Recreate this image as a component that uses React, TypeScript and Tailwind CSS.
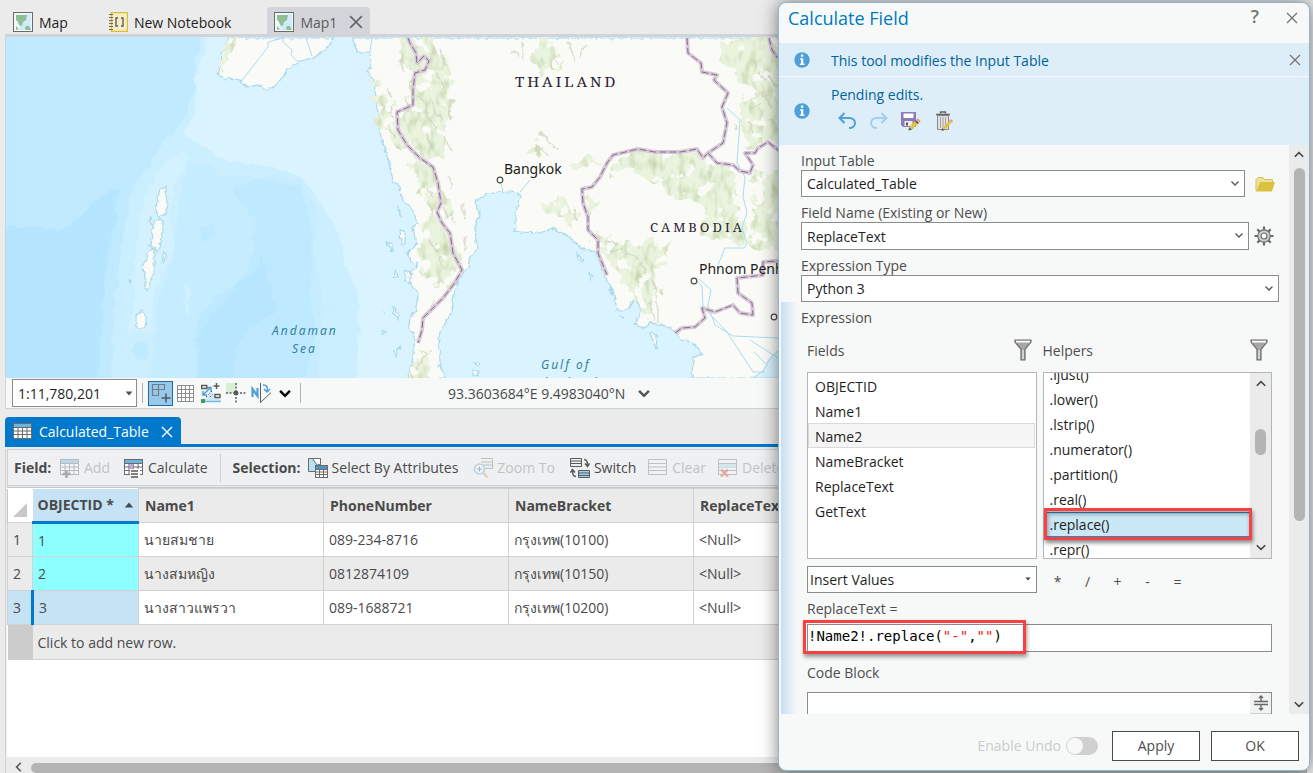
import React from "react";

const baseMap = {
  delta:
    "M228 38 L226 50 L221 52 L222 62 L218 74 L226 80 L228 78 L240 80 L247 87 L258 85 L264 89 L272 89 L283 77 L288 68 L299 62 L312 58 L326 50 L333 38 Z",
  mainland:
    "M352 38 L358 52 L370 52 L371 64 L368 72 L374 80 L376 100 L378 115 L379 130 L384 146 L387 155 L390 165 L393 182 L398 184 L403 200 L412 208 L417 222 L413 228 L417 243 L407 253 L412 262 L418 263 L408 280 L418 293 L417 310 L410 317 L409 327 L415 337 L412 363 L407 378 L445 378 L440 367 L440 352 L438 345 L440 333 L452 310 L454 295 L458 280 L468 267 L470 258 L477 250 L475 227 L480 213 L475 202 L487 193 L500 192 L513 192 L520 195 L515 217 L517 228 L513 230 L520 232 L540 233 L553 228 L570 237 L580 248 L597 252 L603 273 L613 290 L617 310 L627 310 L635 298 L642 310 L635 325 L642 328 L650 323 L670 327 L682 340 L693 343 L703 353 L693 358 L692 378 L1320 378 L1320 38 Z",
  borders: [
    "M408 38 L410 43 L416 53 L417 63 L424 56 L429 61 L425 70 L415 73 L413 90 L413 105 L397 112 L398 130 L407 145 L420 158 L433 167 L438 183 L441 203 L437 212 L442 223 L450 233 L453 253 L462 270 L454 284 L443 298 L423 318 L422 330 L418 343",
    "M687 38 L688 53 L701 63 L702 72 L717 75 L714 80 L728 93 L722 107 L727 123 L723 143 L708 153 L703 158 L697 149 L680 152 L655 152 L638 149 L613 155 L607 163 L600 177 L592 187 L582 189 L583 203 L588 217 L588 230 L598 240 L598 253 L607 275",
    "M708 153 L717 163 L733 165 L740 171 L750 173 L753 165 L745 153 L755 153 L758 148 L768 142 L778 150 L800 150",
    "M675 333 L682 328 L695 327 L705 318 L702 308 L715 312 L733 305 L740 313 L753 315 L752 303 L738 293 L737 278 L763 275 L763 262 L790 260",
    "M769 38 L772 50 L777 57 L790 60",
  ],
  rivers: [
    "M727 108 L740 120 L737 163 L745 177 L743 197 L747 212 L742 228 L747 243 L744 248 L725 248 L718 265",
    "M697 281 L702 286 L703 307 L727 332 L753 372 L765 372",
    "M699 279 L711 290 L708 306 L715 325 L733 336 L778 338",
    "M500 181 L503 191 M530 180 L520 192 M754 352 L768 366 M750 340 L778 358",
    "M240 83 L268 47 L268 42 L283 38 L283 42 L292 50 L291 55 L298 62 M306 38 L312 56 M370 52 L372 38",
  ],
  green: [
    "M228 40 L234 38 L231 60 L224 72 L219 73 L223 60 Z",
    "M371 75 L385 90 L397 112 L398 130 L420 160 L433 168 L438 190 L432 215 L422 190 L400 150 L382 125 Z",
    "M395 38 L430 38 L450 70 L452 120 L440 128 L444 160 L428 158 L404 140 L400 118 L415 105 L410 70 Z",
    "M437 190 L452 200 L450 236 L462 262 L455 280 L438 290 L425 270 L418 245 L428 225 Z",
    "M412 355 L432 350 L428 378 L410 378 Z",
    "M540 38 L558 45 L562 70 L548 68 L538 82 L535 55 Z",
    "M565 155 L600 160 L605 164 L590 168 L568 163 Z",
    "M530 145 L545 152 L540 158 L528 150 Z",
    "M612 158 L640 152 L696 153 L705 160 L740 172 L735 200 L742 215 L710 225 L700 205 L676 200 L660 185 L640 175 L610 176 Z",
    "M584 190 L600 192 L596 215 L590 218 Z",
    "M591 232 L612 240 L640 245 L672 240 L668 262 L650 275 L660 295 L645 320 L630 290 L612 268 L602 262 Z",
    "M700 222 L745 215 L745 240 L728 246 L700 238 Z",
    "M722 38 L768 38 L790 60 L790 148 L768 140 L745 152 L738 110 L752 95 L735 75 L720 60 Z",
    "M750 180 L790 160 L790 250 L752 248 Z",
    "M548 205 L562 196 L578 215 L570 225 L552 215 Z",
  ],
  relief: [
    "M386 88 l6 10 M390 105 l5 14 M386 125 l10 12 M404 95 l3 18 M420 95 l8 22 l8 12 M436 72 l7 18 M430 100 l10 20 M448 100 l4 20 M426 130 l6 20 M446 135 l5 18",
    "M399 60 l4 14 M432 45 l3 12 M440 50 l5 16 M522 42 l2 18 M512 52 l8 6 M568 42 l6 20 M555 58 l5 8 M580 60 l6 -14",
    "M428 185 l4 12 M448 175 l3 14 M445 210 l4 10 M452 215 l2 8 M430 240 l5 12 M440 255 l4 16 M464 205 l2 14 M466 235 l-2 14 M436 300 l-6 12 M424 355 l-6 14",
    "M606 240 l10 4 M610 250 l12 -2 M626 252 l12 6 M640 262 l8 12 M655 282 l4 40 M650 300 l4 20 M540 130 l16 20 M575 210 l2 10 M535 145 l16 10",
    "M758 70 l8 10 M762 92 l10 16 M770 120 l8 10 M750 122 l3 12 M735 125 l2 6 M752 108 l12 -6 M768 75 l7 12",
  ],
  islands: [
    "M157 200 L160 190 L166 186 L166 196 L168 204 L165 214 L158 218 L156 210 Z",
    "M154 222 L158 219 L163 221 L163 232 L161 241 L158 250 L150 246 L152 232 Z",
    "M148 252 L155 248 L154 263 L154 272 L150 282 L148 290 L144 288 L146 278 L142 266 L147 260 Z",
    "M136 316 L141 310 L146 317 L145 328 L136 328 Z",
    "M150 216 l2 8 l-3 -2 Z M163 252 l4 3 l-4 7 Z M129 280 l3 0 l-1 2 Z",
    "M400 230 l5 2 l0 12 l-4 0 Z M386 242 l6 2 l0 6 Z M405 270 l6 2 l-2 12 l-4 -4 Z M396 270 l2 8 l-4 -2 Z",
    "M393 306 l5 8 l0 6 l-4 -6 Z M383 310 l2 4 Z M394 352 l6 -6 l-4 10 Z M383 330 l3 2 l-3 2 Z M398 206 l3 12 l-3 -8 Z",
    "M474 362 l6 1 l-2 4 Z M473 370 l6 1 l-1 5 l-5 -1 Z M578 254 l5 6 l-4 0 Z M589 273 l4 2 l-2 4 Z M610 287 l3 8 l-3 -3 Z M650 333 l7 2 l-1 14 l-4 -10 Z M619 316 l5 2 Z",
  ],
};

const BaseMap = () => (
  <svg
    className="block h-full w-full"
    viewBox="0 0 1301 341"
    preserveAspectRatio="xMinYMin slice"
    role="img"
    aria-label="Topographic map of the Andaman Sea and Thailand"
  >
    <defs>
      <filter id="rough" x="-5%" y="-5%" width="110%" height="110%" colorInterpolationFilters="sRGB">
        <feTurbulence type="fractalNoise" baseFrequency="0.09" numOctaves="3" seed="4" />
        <feDisplacementMap in="SourceGraphic" scale="9" xChannelSelector="R" yChannelSelector="G" />
      </filter>
      <filter id="coast" x="-5%" y="-5%" width="110%" height="110%" colorInterpolationFilters="sRGB">
        <feTurbulence type="fractalNoise" baseFrequency="0.2" numOctaves="2" seed="9" />
        <feDisplacementMap in="SourceGraphic" scale="5" xChannelSelector="R" yChannelSelector="G" />
      </filter>
      {/* ragged vegetation with clearings and a little hill shade */}
      <filter id="forest" x="-5%" y="-5%" width="110%" height="110%" colorInterpolationFilters="sRGB">
        <feTurbulence type="fractalNoise" baseFrequency="0.06" numOctaves="4" seed="12" result="noise" />
        <feDisplacementMap in="SourceGraphic" in2="noise" scale="24" xChannelSelector="R" yChannelSelector="G" result="shape" />
        <feColorMatrix in="noise" values="0 0 0 0 0  0 0 0 0 0  0 0 0 0 0  0 0 22 0 -7.5" result="clearings" />
        <feComposite in="shape" in2="clearings" operator="in" result="patches" />
        <feTurbulence type="fractalNoise" baseFrequency="0.14 0.07" numOctaves="2" seed="3" />
        <feColorMatrix values="0 0 0 0 0.72  0 0 0 0 0.78  0 0 0 0 0.6  1.6 0 0 0 -0.75" />
        <feComposite in2="patches" operator="in" result="shade" />
        <feMerge>
          <feMergeNode in="patches" />
          <feMergeNode in="shade" />
        </feMerge>
      </filter>
    </defs>
    <g transform="translate(-6 -37)">
      <path fill="#d9f3ff" d="M0 30 H1320 V380 H0 Z" />
      <g filter="url(#rough)">
        <path fill="#ccefff" d="M0 20 H208 L206 50 L197 70 L195 110 L184 134 L210 149 L222 160 L260 165 L300 175 L318 198 L340 235 L345 265 L357 292 L360 330 L355 390 H0 Z" />
        <path fill="#c0eaff" d="M0 20 H206 L196 58 L194 90 L188 112 L176 132 L162 142 L150 165 L136 182 L130 200 L124 230 L116 290 L110 390 H0 Z" />
        <path fill="#b6e5ff" d="M0 224 L60 231 L80 216 L100 196 L118 186 L115 220 L107 260 L103 300 L97 390 H0 Z" />
        <path fill="#c6ecff" d="M187 165 L205 160 L220 175 L300 178 L316 210 L314 260 L322 300 L318 390 H150 L158 300 L175 250 L180 200 Z" />
        <path fill="#bfe9ff" d="M232 190 L262 178 L300 186 L312 235 L310 300 L316 340 L300 390 H194 L196 325 L205 305 L236 283 L250 270 L256 220 Z" />
        <path fill="#b8e6ff" d="M198 390 L200 330 L222 305 L238 284 L258 268 L260 250 L272 292 L276 312 L250 330 L236 345 L232 390 Z" />
        <path fill="#bee9ff" d="M200 228 L212 222 L216 238 L204 242 Z" />
        <path fill="#d4f1ff" d="M187 149 L186 162 L174 188 L168 210 L174 232 L173 262 L160 272 L153 300 L151 333 L126 330 L136 304 L133 280 L137 240 L142 206 L150 185 L170 158 Z" />
        <path fill="#d2f1ff" d="M186 282 L190 292 L188 318 L182 300 Z" />
        <path fill="#c0eaff" d="M134 338 L148 344 L148 360 L134 358 Z" />
      </g>
      <g filter="url(#coast)" fill="#fafbf7" stroke="#a9d8ec" strokeWidth="1.2">
        <path d={baseMap.delta} />
        <path d={baseMap.mainland} />
        {baseMap.islands.map((d) => (
          <path key={d} d={d} />
        ))}
      </g>
      <path fill="#d9f3ff" stroke="#a9d8ec" d="M753 378 L763 371 L770 358 L779 350 L800 350 V378 Z" />
      <g filter="url(#forest)" fill="#e9f3dd">
        {baseMap.green.map((d) => (
          <path key={d} d={d} />
        ))}
      </g>
      <g filter="url(#rough)" fill="none" stroke="#cfcfbd" strokeWidth="1.6" opacity="0.7">
        {baseMap.relief.map((d) => (
          <path key={d} d={d} />
        ))}
      </g>
      <g fill="none" stroke="#aadcf2" strokeWidth="1">
        {baseMap.rivers.map((d) => (
          <path key={d} d={d} />
        ))}
      </g>
      {baseMap.borders.map((d) => (
        <g key={d} fill="none" strokeLinejoin="round">
          <path d={d} stroke="#d8c8da" strokeWidth="4" />
          <path d={d} stroke="#7d7280" strokeWidth="1" strokeDasharray="7 3" />
        </g>
      ))}
      <g className="font-['Noto_Serif','DejaVu_Serif',serif] tracking-[3px]" fill="#2b2233">
        <text className="text-[15px]" x="515" y="87">
          THAILAND
        </text>
        <text className="text-[13px]" x="650" y="232">
          CAMBODIA
        </text>
      </g>
      <g className="font-['Noto_Sans',sans-serif] text-[14px]" fill="#1c1c1c">
        <text x="504" y="174">Bangkok</text>
        <text x="699" y="274">Phnom Penh</text>
      </g>
      <g className="font-['Noto_Sans',sans-serif] text-[12px] italic tracking-[2px]" fill="#33819f">
        <text x="272" y="335">Andaman</text>
        <text x="292" y="353">Sea</text>
        <text x="541" y="369">Gulf of</text>
        <text x="536" y="387">Thailand</text>
      </g>
      <g fill="#fff" stroke="#4d4d4d" strokeWidth="1.2">
        <circle cx="500" cy="180" r="2.8" />
        <circle cx="694" cy="281" r="2.8" />
        <circle cx="774" cy="317" r="2.8" />
      </g>
    </g>
  </svg>
);

const MapIcon = () => (
  <svg className="size-5 shrink-0" viewBox="0 0 20 20" aria-hidden="true">
    <rect x="0.5" y="0.5" width="19" height="19" fill="#f1f8fc" stroke="#6b6b6b" />
    <path fill="#d3ebf8" d="M13 2h5v16H7l-1-4 4-4Z" />
    <path fill="#8fbf97" d="M3 3h11l-1 5-3 2-1 4-3-1-1-3-2-2Z" />
    <path fill="#8fbf97" d="M3 14l3 3-3 1Z M12 17c0-3 2-4 4-3l2 4h-5Z" />
  </svg>
);

const NotebookIcon = () => (
  <svg className="size-5 shrink-0" viewBox="0 0 20 20" aria-hidden="true">
    <rect x="3.5" y="0.5" width="16" height="19" fill="#f4edc6" stroke="#d9bf3a" strokeWidth="1.4" />
    <path stroke="#6b6b6b" d="M1 2.5h4M1 5.5h4M1 8.5h4M1 11.5h4M1 14.5h4M1 17.5h4" />
    <path fill="none" stroke="#5f5f5f" strokeWidth="1.4" d="M10 6H8v8h2M13 6h2v8h-2" />
  </svg>
);

const Cross = ({ className }: { className: string }) => (
  <svg className={className} viewBox="0 0 12 12" aria-hidden="true">
    <path d="M1 1l10 10M11 1L1 11" fill="none" stroke="currentColor" strokeWidth="1.4" />
  </svg>
);

const Chevron = ({ className }: { className: string }) => (
  <svg className={className} viewBox="0 0 10 10" aria-hidden="true">
    <path d="M1.5 3.5L5 7l3.5-3.5" fill="none" stroke="currentColor" strokeWidth="1.3" />
  </svg>
);

const BoldChevron = ({ className }: { className: string }) => (
  <svg className={className} viewBox="0 0 10 10" aria-hidden="true">
    <path d="M1.5 3.5L5 7l3.5-3.5" fill="none" stroke="currentColor" strokeWidth="1.8" />
  </svg>
);

const Caret = ({ className }: { className: string }) => (
  <svg className={className} viewBox="0 0 8 5" aria-hidden="true">
    <path d="M0.5 0.5h7L4 4.5z" fill="currentColor" />
  </svg>
);

const TableGlyph = ({ children, faded }: { children?: React.ReactNode; faded?: boolean }) => (
  <svg className={faded ? "size-5 opacity-40" : "size-5"} viewBox="0 0 20 20" aria-hidden="true">
    <rect x="0.5" y="1.5" width="18" height="15" fill="#fff" stroke="#6b6b6b" />
    <rect x="1" y="2" width="17" height="3" fill="#6fb4df" />
    <path stroke="#6b6b6b" d="M1 5.5h17M1 9h17M1 12.5h17M5 5v11M9.5 5v11M14 5v11" />
    {children}
  </svg>
);

const SelectByIcon = () => (
  <svg className="size-5" viewBox="0 0 20 20" aria-hidden="true">
    <path fill="#b5e3f2" stroke="#6b6b6b" d="M0.5 0.5h12v13h-12z" />
    <path fill="#fff" stroke="#6b6b6b" d="M4.5 0.5h8v6L9 7z" />
    <rect x="7.5" y="7.5" width="12" height="12" fill="#fff" stroke="#6b6b6b" />
    <rect x="8" y="8" width="11" height="3" fill="#4d93c1" />
    <path stroke="#6b6b6b" d="M8 11.5h11M8 14h11M8 16.5h11M11.5 11v8M15.5 11v8" />
  </svg>
);

const ZoomToIcon = () => (
  <svg className="size-5 opacity-40" viewBox="0 0 20 20" aria-hidden="true">
    <path fill="#e9f1ea" stroke="#7b7b7b" d="M8 0.5h11.5v10H12M8 4h11M10 7h9" />
    <circle cx="6.5" cy="11" r="5" fill="#eff8ff" stroke="#5aa7d8" strokeWidth="1.5" />
    <path stroke="#555" d="M4 11h5M6.5 8.5v5" />
    <path stroke="#d89a5b" strokeWidth="2.2" d="M10.5 15l4 4.5" />
  </svg>
);

const SwitchIcon = () => (
  <svg className="size-5" viewBox="0 0 20 20" aria-hidden="true">
    <path fill="#eef1f2" stroke="#5b5b5b" d="M0.5 0.5h11v8h-11zM0.5 3h11M0.5 5.5h11" />
    <path fill="#9ad7ec" stroke="#5b5b5b" d="M8.5 12.5h11v7h-11zM8.5 15h11M8.5 17.5h11" />
    <path fill="none" stroke="#5b5b5b" strokeWidth="1.5" d="M14 1.5c3 0 3.5 2 3.5 6M15 5.5l2.5 3 2-3M6 18.5c-3 0-3.5-2-3.5-6M0.5 14.5l2-3 2.5 3" />
  </svg>
);

const ClearIcon = ({ remove }: { remove?: boolean }) => (
  <svg className="size-5 opacity-40" viewBox="0 0 20 20" aria-hidden="true">
    <path fill="#f5f5f5" stroke="#7b7b7b" d="M0.5 1.5h18v15h-18zM0.5 5.5h18M0.5 9h18M0.5 12.5h18" />
    {remove && <path fill="#a8dced" d="M1 6h17v3H1z" />}
    {remove && <path stroke="#d5432b" strokeWidth="2.4" d="M3 11.5l7 7M10 11.5l-7 7" />}
  </svg>
);

const InfoIcon = () => (
  <svg className="size-4 shrink-0" viewBox="0 0 16 16" aria-hidden="true">
    <circle cx="8" cy="8" r="7.7" fill="#4c9fd8" />
    <path fill="#fff" d="M6.9 2.6h2.4v2.2H6.9zM6 6.2h3.3v5.4h1.2v1.3H5.8v-1.3h1.2V7.5H6z" />
  </svg>
);

const UndoIcon = ({ className }: { className: string }) => (
  <svg className={className} viewBox="0 0 20 20" aria-hidden="true">
    <path fill="none" stroke="#4c9fd8" strokeWidth="2" d="M7.5 2L2.5 7l5 5M3 7h9c4 0 6 2.500 6 5s-2 5-6 5" />
  </svg>
);

const SaveEditsIcon = () => (
  <svg className="size-5" viewBox="0 0 20 20" aria-hidden="true">
    <path fill="#8a7bbd" d="M0 1h15v15H2l-2-2z" />
    <path fill="#fff" d="M2.5 2.5h10V7h-10z" />
    <path fill="#eee" d="M3.5 10h8v5h-8z" />
    <path fill="#555" d="M5 11.5h2v3H5z" />
    <path stroke="#e0c341" strokeWidth="4" d="M10 17l6-6" />
    <path fill="#555" d="M7.5 19.5l.8-3.5 2.8 2.8z" />
    <path stroke="#555" strokeWidth="4" d="M15.3 11.7l1.2-1.2" />
    <path stroke="#e99a85" strokeWidth="4" d="M16.5 10.5l1.8-1.8" />
  </svg>
);

const DiscardEditsIcon = () => (
  <svg className="size-5" viewBox="0 0 20 20" aria-hidden="true">
    <path fill="#e0e0e0" stroke="#8a8a8a" d="M2.5 4.5h11v14h-11z" />
    <path stroke="#a5a5a5" d="M5.5 6v11M8 6v11M10.5 6v11" />
    <path stroke="#666" strokeWidth="1.4" d="M1 3.5h14M5.5 2.5V1h5v1.500" fill="none" />
    <path stroke="#e0c341" strokeWidth="3" d="M9 17.5l6.5-7" />
    <path stroke="#e99a85" strokeWidth="3" d="M15.5 10.5L17 9" />
    <path fill="#555" d="M6.5 20l1-3 2 2z" />
  </svg>
);

const FolderIcon = () => (
  <svg className="size-5" viewBox="0 0 20 20" aria-hidden="true">
    <path fill="#eee0a0" stroke="#d8c24f" d="M1 16.5V5.5l2-2h5l1.5 2h8v3" />
    <path fill="#d9c23f" d="M5 8h15l-3 9.500H1z" />
  </svg>
);

const GearIcon = () => (
  <svg className="size-5" viewBox="0 0 20 20" aria-hidden="true">
    <g stroke="#6b6b6b" strokeWidth="2.2">
      <path d="M10 0.5v4M10 15.5v4M0.5 10h4M15.5 10h4M3.3 3.3l2.8 2.8M13.9 13.9l2.8 2.8M3.3 16.7l2.8-2.8M13.9 6.1l2.8-2.8" />
    </g>
    <circle cx="10" cy="10" r="6.2" fill="#d2d2d2" stroke="#6b6b6b" strokeWidth="1.2" />
    <circle cx="10" cy="10" r="3" fill="#f7f9f9" stroke="#6b6b6b" strokeWidth="1.2" />
  </svg>
);

const FunnelIcon = () => (
  <svg className="h-[22px] w-[18px]" viewBox="0 0 18 22" aria-hidden="true">
    <path fill="#a6a6a6" stroke="#6b6b6b" strokeWidth="1.2" d="M1 1h16v2l-6 7.5V21H7V10.5L1 3z" />
    <path fill="#fff" d="M2 1.8h14v1.7H2z" />
    <path stroke="#e3e3e3" strokeWidth="1.5" d="M9 11v9" />
  </svg>
);

const records = [
  { id: 1, name: "นายสมชาย", phone: "089-234-8716", bracket: "กรุงเทพ(10100)" },
  { id: 2, name: "นางสมหญิง", phone: "0812874109", bracket: "กรุงเทพ(10150)" },
  { id: 3, name: "นางสาวแพรวา", phone: "089-1688721", bracket: "กรุงเทพ(10200)" },
];

const fields = ["OBJECTID", "Name1", "Name2", "NameBracket", "ReplaceText", "GetText"];

const helpers = [".ljust()", ".lower()", ".lstrip()", ".numerator()", ".partition()", ".real()", ".replace()", ".repr()"];

const DocumentTabs = () => (
  <nav className="flex h-[34px] items-end pl-[5px] text-[#1f1f1f]">
    <button className="flex h-[27px] items-center gap-1.5 px-2 pt-[3px]">
      <MapIcon />
      Map
    </button>
    <button className="ml-6 flex h-[27px] items-center gap-1.5 px-2 pt-[3px]">
      <NotebookIcon />
      New Notebook
    </button>
    <div className="ml-7 flex h-[27px] items-center rounded-t bg-[#d4d5da] pt-[3px] pr-[7px] pl-[7px]">
      <button className="flex items-center gap-1.5 text-[#5a5a5a]">
        <MapIcon />
        Map1
      </button>
      <button aria-label="Close Map1" className="ml-3 text-[#666]">
        <Cross className="size-3.5" />
      </button>
    </div>
  </nav>
);

const MapStatusBar = () => (
  <div className="flex h-[31px] items-center border-b border-[#d0d0d4] bg-[#f7f9f8] pl-1.5 text-[#4a4a4a]">
    <div className="relative">
      <select aria-label="Map scale" className="h-7 w-[125px] appearance-none border border-[#8c8c8c] bg-white pl-[5px] text-[#1f1f1f]">
        <option>1:11,780,201</option>
      </select>
      <Caret className="pointer-events-none absolute top-3 right-1 h-[5px] w-[8px] text-[#555]" />
    </div>
    <span className="mx-[5px] h-5 w-px bg-[#b0b0b0]" />
    <button aria-label="Dynamic constraints" className="grid size-[25px] place-items-center border border-[#1a6ba8] bg-[#98c8ea]">
      <svg className="size-5" viewBox="0 0 20 20" aria-hidden="true">
        <path fill="none" stroke="#6f7f8a" strokeWidth="1.2" d="M1.5 1.5h6v5h-6zM7.5 1.5h6v5h-6zM1.5 6.5h6v6h-6z" />
        <path stroke="#4a5560" strokeWidth="1.5" d="M15 10.5v9M10.5 15h9" />
      </svg>
    </button>
    <button aria-label="Grid" className="ml-1">
      <svg className="size-[17px]" viewBox="0 0 17 17" aria-hidden="true">
        <path fill="#fff" stroke="#8d8d8d" d="M0.5 0.5h16v16h-16zM4.5 0v17M8.5 0v17M12.5 0v17M0 4.5h17M0 8.5h17M0 12.5h17" />
      </svg>
    </button>
    <button aria-label="Snapping" className="ml-[7px]">
      <svg className="size-5" viewBox="0 0 20 20" aria-hidden="true">
        <path fill="#cfe7f6" d="M3 18L9 8l8 6 3 4z" />
        <path fill="none" stroke="#4c9fd8" strokeWidth="1.5" d="M3 11l6-6M6 4.5h4v4M2 8v4h4" />
        <path stroke="#5b5b5b" strokeDasharray="1.5 2" d="M5 14l7-7M9 14l3-3" />
        <path fill="#fff" stroke="#5b5b5b" strokeWidth="1.4" d="M0.7 2.5h5v3h-5zM14 11.5h5v3h-5z" />
        <path stroke="#5b5b5b" strokeWidth="1.5" d="M15.5 0v6M12.5 3h6" />
        <path fill="#3f9c5c" d="M0 16h4v4H0z" />
        <path stroke="#7db9e0" strokeWidth="1.5" d="M4 18.5h16" />
      </svg>
    </button>
    <button aria-label="Inference" className="ml-[5px]">
      <svg className="size-5" viewBox="0 0 20 20" aria-hidden="true">
        <path fill="#d9efd2" d="M0 0h10v10H0z" />
        <path stroke="#5b5b5b" strokeWidth="1.5" strokeDasharray="2 1.5" d="M0 10h20M10 0v20" />
        <path fill="#5b5b5b" d="M8 8h4v4H8z" />
      </svg>
    </button>
    <button aria-label="Ground to grid correction" className="ml-[5px]">
      <svg className="size-5" viewBox="0 0 20 20" aria-hidden="true">
        <path fill="none" stroke="#4c9fd8" strokeWidth="2.2" d="M1.5 14V6l5 7V5" />
        <path stroke="#5b5b5b" d="M9.5 0v19.5l10.5-10" fill="none" />
        <path fill="none" stroke="#4c9fd8" strokeWidth="1.5" d="M12 2c4 0 5 2 4 6M13 6l3 3 3-3" />
      </svg>
    </button>
    <button aria-label="More map options" className="ml-[7px] text-black">
      <BoldChevron className="size-3.5" />
    </button>
    <span className="ml-2 h-5 w-px bg-[#b0b0b0]" />
    <span className="ml-[147px]">93.3603684°E 9.4983040°N</span>
    <button aria-label="Coordinate format" className="ml-3 text-[#555]">
      <BoldChevron className="size-3.5" />
    </button>
  </div>
);

const TableToolbar = () => (
  <div className="flex h-[37px] items-center border border-[#cfd0d3] bg-[#eff0f2] pl-1.5 whitespace-nowrap text-[#4a4a4a]">
    <span className="w-[46px] font-bold">Field:</span>
    <button disabled className="flex w-16 items-center gap-1 text-[#c2c2c4]">
      <TableGlyph faded>
        <path stroke="#444" strokeWidth="2.4" d="M6.5 12v8M2.5 16h8" />
      </TableGlyph>
      Add
    </button>
    <button className="flex items-center gap-1">
      <TableGlyph>
        <path fill="#b9a9d3" d="M5.5 6h4v10h-4z" />
        <path fill="#fff" d="M6 11h10v8H6z" />
        <path stroke="#555" strokeWidth="1.6" d="M7 13h7M7 16h7M7 19h7" />
      </TableGlyph>
      Calculate
    </button>
    <span className="mx-3 h-7 w-px bg-[#cfcfcf]" />
    <span className="w-[75px] font-bold">Selection:</span>
    <button className="flex items-center gap-1">
      <SelectByIcon />
      Select By Attributes
    </button>
    <button disabled className="ml-[15px] flex items-center gap-1 text-[#c2c2c4]">
      <ZoomToIcon />
      Zoom To
    </button>
    <button className="ml-[15px] flex items-center gap-1">
      <SwitchIcon />
      Switch
    </button>
    <button disabled className="ml-3 flex items-center gap-1 text-[#c2c2c4]">
      <ClearIcon />
      Clear
    </button>
    <button disabled className="ml-3 flex items-center gap-1 text-[#c2c2c4]">
      <ClearIcon remove />
      Delete
    </button>
  </div>
);

const AttributeTable = () => (
  <table className="w-full table-fixed border-collapse text-left text-[#4a4a4a]">
    <colgroup>
      <col className="w-[25px]" />
      <col className="w-[106px]" />
      <col className="w-[185px]" />
      <col className="w-[185px]" />
      <col className="w-[185px]" />
      <col />
    </colgroup>
    <thead>
      <tr className="h-[34px] bg-[#ebebeb]">
        <th aria-label="Row" className="border-l border-[#c8c8c8] bg-white">
          <svg className="mt-2.5 ml-[5px] size-3.5" viewBox="0 0 14 14" aria-hidden="true">
            <path fill="#c8c8c8" d="M14 0v14H0z" />
          </svg>
        </th>
        <th className="border-b-[3px] border-b-[#0079cc] bg-[#c6e2f5] pr-1 pl-[5px]">
          <span className="flex items-center justify-between">
            OBJECTID *
            <Caret className="h-1.5 w-2.5 rotate-180" />
          </span>
        </th>
        <th className="border border-[#d2d2d2] px-1.5">Name1</th>
        <th className="border border-[#d2d2d2] px-1.5">PhoneNumber</th>
        <th className="border border-[#d2d2d2] px-1.5">NameBracket</th>
        <th className="border border-[#d2d2d2] px-1.5">ReplaceText</th>
      </tr>
    </thead>
    <tbody>
      {records.map((r) => (
        <tr key={r.id} className={r.id === 2 ? "h-[34px] bg-[#ebebeb]" : "h-[34px] bg-white"}>
          <td
            className={
              r.id === 3
                ? "border border-r-[3px] border-[#d2d2d2] border-r-[#0079cc] bg-[#c6e2f5] pl-[5px]"
                : "border border-[#d2d2d2] bg-[#ebebeb] pl-[5px]"
            }
          >
            {r.id}
          </td>
          <td className={r.id === 3 ? "border border-[#d2d2d2] bg-[#c6e2f5] px-[5px]" : "border border-[#d2d2d2] bg-[#8cffff] px-[5px]"}>
            {r.id}
          </td>
          <td className="border border-[#d2d2d2] px-[5px]">{r.name}</td>
          <td className="border border-[#d2d2d2] px-[5px]">{r.phone}</td>
          <td className="border border-[#d2d2d2] px-[5px]">{r.bracket}</td>
          <td className="border border-[#d2d2d2] px-[5px]">&lt;Null&gt;</td>
        </tr>
      ))}
      <tr className="h-[35px] bg-[#ebebeb]">
        <td className="bg-[#cccccc]" />
        <td colSpan={5} className="border-b border-[#d2d2d2] px-[5px]">
          Click to add new row.
        </td>
      </tr>
    </tbody>
  </table>
);

const Combo = ({ id, value, className }: { id: string; value: string; className: string }) => (
  <div className="relative flex-1">
    <select id={id} className={`w-full appearance-none border border-[#8c8c8c] bg-white pl-[5px] text-[#1f1f1f] ${className}`}>
      <option>{value}</option>
    </select>
    <Chevron className="pointer-events-none absolute top-2 right-[5px] size-2.5 text-[#555]" />
  </div>
);

const ExpressionSection = () => (
  <div className="ml-0.5 bg-linear-to-r from-[#c6def2] to-transparent to-[16px] pt-1.5 pr-[7px] pl-5">
    <h3 className="leading-5">Expression</h3>
    <div className="pl-1.5">
      <div className="mt-2.5 grid grid-cols-2 gap-x-1.5">
        <div>
          <div className="mb-2.5 flex h-6 items-center justify-between pr-[5px]">
            <span id="fields-label">Fields</span>
            <button type="button" aria-label="Filter fields">
              <FunnelIcon />
            </button>
          </div>
          <ul aria-labelledby="fields-label" className="h-[187px] border border-[#b4b6b9] bg-white pr-px text-[#1f1f1f]">
            {fields.map((f) => (
              <li key={f}>
                <button
                  type="button"
                  className={
                    f === "Name2"
                      ? "block h-[25px] w-full border border-[#dadada] bg-[#f5f5f5] px-1.5 pt-px text-left"
                      : "block h-[25px] w-full border border-transparent px-1.5 pt-px text-left"
                  }
                >
                  {f}
                </button>
              </li>
            ))}
          </ul>
        </div>
        <div className="relative">
          <div className="mb-2.5 flex h-6 items-center justify-between pr-1">
            <span id="helpers-label">Helpers</span>
            <button type="button" aria-label="Filter helpers">
              <FunnelIcon />
            </button>
          </div>
          <div className="flex h-[187px] overflow-hidden border border-[#b4b6b9] bg-white text-[#1f1f1f]">
            <ul aria-labelledby="helpers-label" className="-mt-[11px] flex-1">
              {helpers.map((h) => (
                <li key={h}>
                  <button
                    type="button"
                    className={
                      h === ".replace()"
                        ? "block h-[25px] w-full border border-[#2a8dc8] bg-[#cbe8f6] px-[5px] text-left"
                        : "block h-[25px] w-full border border-transparent px-[5px] text-left"
                    }
                  >
                    {h}
                  </button>
                </li>
              ))}
            </ul>
            <div className="flex w-[21px] flex-col items-center justify-between bg-[#ebebeb] py-[5px] text-[#444]">
              <Chevron className="size-3 rotate-180" />
              <span className="mb-12 h-[26px] w-[11px] rounded-full bg-[#b4b4b4]" />
              <Chevron className="size-3" />
            </div>
          </div>
          <div className="pointer-events-none absolute top-[170px] right-5 left-px h-8 border-[3px] border-[#fa4040] shadow-[1px_3px_4px_rgba(0,0,0,0.45),inset_1px_3px_4px_rgba(0,0,0,0.35)]" />
        </div>
      </div>

      <div className="mt-[7px] grid grid-cols-2 gap-x-1.5">
        <div className="relative">
          <select aria-label="Insert Values" className="h-[27px] w-full appearance-none border border-[#8c8c8c] bg-white pl-0.5 text-[#1f1f1f]">
            <option>Insert Values</option>
          </select>
          <Caret className="pointer-events-none absolute top-[11px] right-1.5 h-1 w-1.5 text-[#444]" />
        </div>
        <div className="flex items-center pt-1">
          {["*", "/", "+", "-", "="].map((op) => (
            <button type="button" key={op} className="w-[30px]">
              {op}
            </button>
          ))}
        </div>
      </div>

      <label htmlFor="expression" className="mt-1.5 block leading-5">
        ReplaceText =
      </label>
      <div className="relative mt-[5px] h-7 border border-[#8c8c8c] bg-white font-['DejaVu_Sans_Mono',monospace] text-[14px] leading-[22px] text-black">
        <div aria-hidden="true" className="whitespace-pre">
          !Name2!.replace(<span className="text-[#f01818]">"-"</span>,<span className="text-[#f01818]">""</span>)
        </div>
        <input
          id="expression"
          defaultValue={'!Name2!.replace("-","")'}
          className="absolute inset-0 w-full bg-transparent text-transparent caret-black outline-none"
        />
        <div className="pointer-events-none absolute -top-[5px] -left-[5px] h-[34px] w-[223px] border-[3px] border-[#fa4040] shadow-[1px_3px_4px_rgba(0,0,0,0.4)]" />
      </div>

      <label htmlFor="code-block" className="mt-[11px] block leading-5">
        Code Block
      </label>
      <div className="mt-[9px] flex border border-[#8c8c8c] bg-white">
        <textarea id="code-block" className="h-24 flex-1 resize-none outline-none" />
        <button type="button" aria-label="Resize code block" className="h-[21px] w-[21px] border-b border-[#cfcfcf] bg-[#f2f2f2]">
          <svg className="mx-auto size-4" viewBox="0 0 16 16" aria-hidden="true">
            <path fill="none" stroke="#666" strokeWidth="1.3" d="M1 6.5h14M1 9.5h14M8 6V1M6 3l2-2 2 2M8 10v5M6 13l2 2 2-2" />
          </svg>
        </button>
      </div>
    </div>
  </div>
);

const CalculateFieldDialog = () => (
  <section
    role="dialog"
    aria-labelledby="dialog-title"
    className="absolute top-[2px] right-[3px] bottom-[2px] flex w-[532px] flex-col overflow-hidden rounded-lg border border-[#8fb6cd] bg-[#f7f9f9] text-[#4d4d4d] shadow-[0_0_18px_rgba(0,0,0,0.5)]"
  >
    <header className="flex h-10 shrink-0 items-start pt-px pr-[11px] pl-[9px]">
      <h2 id="dialog-title" className="flex-1 text-[18px] leading-7 text-[#0079c1]">
        Calculate Field
      </h2>
      <button aria-label="Help" className="mr-[27px] text-[18px] leading-6 font-semibold text-[#777]">
        ?
      </button>
      <button aria-label="Close" className="pt-2 text-[#777]">
        <Cross className="size-3" />
      </button>
    </header>
    <div className="flex h-[34px] shrink-0 items-center border-b border-[#f7fbfd] bg-[#deeef9] pr-2 pl-[15px] text-[#00629b]">
      <InfoIcon />
      <p className="ml-[21px] flex-1 pt-0.5">This tool modifies the Input Table</p>
      <button aria-label="Dismiss message" className="text-[#777]">
        <Cross className="size-3" />
      </button>
    </div>
    <div className="flex h-[68px] shrink-0 items-center bg-[#deeef9] pl-[15px] text-[#00629b]">
      <InfoIcon />
      <div className="ml-[21px] pb-1.5">
        <p className="leading-5">Pending edits.</p>
        <div className="mt-1.5 flex gap-3 pl-1.5">
          <button aria-label="Undo">
            <UndoIcon className="size-5" />
          </button>
          <button aria-label="Redo" disabled>
            <UndoIcon className="size-5 -scale-x-100 opacity-40" />
          </button>
          <button aria-label="Save edits">
            <SaveEditsIcon />
          </button>
          <button aria-label="Discard edits" className="ml-0.5">
            <DiscardEditsIcon />
          </button>
        </div>
      </div>
    </div>

    <div className="flex min-h-0 flex-1">
      <form className="min-w-0 flex-1 overflow-hidden pr-2.5">
        <div className="pt-1.5 pl-[22px]">
          <label htmlFor="input-table" className="block leading-[19px]">
            Input Table
          </label>
          <div className="flex">
            <Combo id="input-table" value="Calculated_Table" className="h-[27px]" />
            <button type="button" aria-label="Browse" className="w-[34px] pl-2.5">
              <FolderIcon />
            </button>
          </div>
          <label htmlFor="field-name" className="mt-1.5 block leading-[19px]">
            Field Name (Existing or New)
          </label>
          <div className="flex">
            <Combo id="field-name" value="ReplaceText" className="h-7" />
            <button type="button" aria-label="Field properties" className="w-[30px] pl-[5px]">
              <GearIcon />
            </button>
          </div>
          <label htmlFor="expression-type" className="mt-1.5 block leading-[19px]">
            Expression Type
          </label>
          <div className="flex">
            <Combo id="expression-type" value="Python 3" className="h-[27px]" />
          </div>
        </div>
        <ExpressionSection />
      </form>
      <div className="flex w-5 flex-col items-center bg-[#ebebeb] py-1 text-[#444]">
        <Chevron className="size-3 rotate-180" />
        <span className="mt-[7px] h-[353px] w-[11px] rounded-full bg-[#b4b4b4]" />
        <Chevron className="mt-auto size-3" />
      </div>
    </div>

    <footer className="flex h-[56px] shrink-0 items-center justify-end pt-[7px] pr-2.5">
      <label className="flex items-center gap-[5px] text-[#cbcbcb]">
        Enable Undo
        <input type="checkbox" role="switch" disabled className="peer sr-only" />
        <span className="h-[18px] w-8 rounded-full bg-[#d0d0d0] p-px">
          <span className="block size-4 rounded-full bg-[#f7f9f9]" />
        </span>
      </label>
      <button className="ml-3.5 h-[30px] w-[88px] border border-[#4a4a4a] bg-white">Apply</button>
      <button className="ml-[11px] h-[30px] w-[88px] border border-[#4a4a4a] bg-white">OK</button>
    </footer>
  </section>
);

const App: React.FC = () => {
  return (
    <div className="relative flex h-screen flex-col overflow-hidden bg-[#ebebeb] font-['Open_Sans','Noto_Sans',sans-serif] text-[14px]">
      <main className="flex min-h-0 flex-1 flex-col pr-1.5">
        <DocumentTabs />
        <div className="ml-[5px] border-t-[3px] border-l border-[#d2d3d8]">
          <div className="h-[341px] overflow-hidden">
            <BaseMap />
          </div>
          <MapStatusBar />
        </div>

        <div className="mt-2 ml-[5px] flex items-end border-b-[3px] border-[#0079cc]">
          <div className="flex h-[27px] items-center rounded-t bg-[#0079cc] pt-0.5 pr-2 pl-2 text-white">
            <button className="flex items-center gap-1.5">
              <TableGlyph />
              Calculated_Table
            </button>
            <button aria-label="Close Calculated_Table" className="ml-3">
              <Cross className="size-3" />
            </button>
          </div>
        </div>
        <div className="mt-0.5 ml-[5px] flex min-h-0 flex-1 flex-col border-l border-[#d2d2d2] pl-px">
          <TableToolbar />
          <div className="mt-px flex-1 overflow-hidden border-t border-[#c8c8c8] bg-white">
            <AttributeTable />
          </div>
          <div className="flex h-4 items-end bg-[#ebebeb] text-[#555]">
            <Chevron className="mx-1.5 size-3 rotate-90" />
            <span className="h-2.5 flex-1 rounded-l-full bg-[#b4b4b4]" />
          </div>
        </div>
      </main>
      <CalculateFieldDialog />
    </div>
  );
};

export default App;
